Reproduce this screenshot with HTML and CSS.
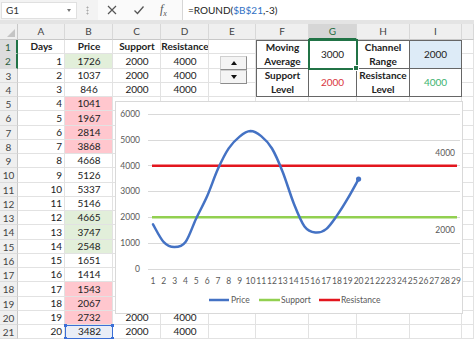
FILE: index.html
```html
<!DOCTYPE html>
<html lang="en">
<head>
  <meta charset="UTF-8">
  <meta name="viewport" content="width=device-width, initial-scale=1.0">
  <title>Support and Resistance</title>
  <link rel="stylesheet" href="styles.css">
</head>
<body>
  <div class="topbar">
    <div class="name-box">G1<span class="caret"></span></div>
    <div class="dots"></div>
    <div class="fx-buttons">
      <svg class="icon" viewBox="0 0 12 12"><path d="M2 2 L10 10 M10 2 L2 10" stroke="#555" stroke-width="1.2" fill="none"/></svg>
      <svg class="icon" viewBox="0 0 12 12"><path d="M1.5 6.5 L4.5 9.5 L10.5 2.5" stroke="#555" stroke-width="1.3" fill="none"/></svg>
      <span class="fx">f<sub>x</sub></span>
    </div>
    <div class="formula">=ROUND(<span class="ref">$B$21</span>,-3)</div>
  </div>

  <div class="sheet" id="sheet">
    <div class="spin">
      <div class="spin-btn"><span class="tri-up"></span></div>
      <div class="spin-btn"><span class="tri-down"></span></div>
    </div>

    <div class="chart">
      <svg id="chart" width="348" height="213" viewBox="0 0 348 213">
        <rect x="0.5" y="0.5" width="347" height="212" fill="#fff" stroke="#d9d9d9"/>
        <g stroke="#d9d9d9" stroke-width="1">
          <line x1="33" y1="13.5" x2="345" y2="13.5"/>
          <line x1="33" y1="39.5" x2="345" y2="39.5"/>
          <line x1="33" y1="64.5" x2="345" y2="64.5"/>
          <line x1="33" y1="90.5" x2="345" y2="90.5"/>
          <line x1="33" y1="116.5" x2="345" y2="116.5"/>
          <line x1="33" y1="142.5" x2="345" y2="142.5"/>
          <line x1="33" y1="168.5" x2="345" y2="168.5"/>
        </g>
        <g class="axis-text" text-anchor="end">
          <text x="25" y="16">6000</text>
          <text x="25" y="42">5000</text>
          <text x="25" y="68">4000</text>
          <text x="25" y="93">3000</text>
          <text x="25" y="119">2000</text>
          <text x="25" y="145">1000</text>
          <text x="25" y="171">0</text>
        </g>
        <g id="xlabels" class="axis-text" text-anchor="middle"></g>
        <line x1="37" y1="64.7" x2="342" y2="64.7" stroke="#e3161e" stroke-width="2.5"/>
        <line x1="37" y1="116.3" x2="342" y2="116.3" stroke="#92d050" stroke-width="2.5"/>
        <path id="price-line" d="" stroke="#4472c4" stroke-width="2.5" fill="none" stroke-linecap="round"/>
        <circle id="price-end" r="2.6" fill="#4472c4"/>
        <g class="axis-text" text-anchor="end">
          <text x="340" y="55">4000</text>
          <text x="340" y="132">2000</text>
        </g>
        <g class="legend-text">
          <line x1="94" y1="199" x2="114" y2="199" stroke="#4472c4" stroke-width="2.5"/>
          <text x="116" y="202">Price</text>
          <line x1="144" y1="199" x2="165" y2="199" stroke="#92d050" stroke-width="2.5"/>
          <text x="166" y="202">Support</text>
          <line x1="204" y1="199" x2="225" y2="199" stroke="#e3161e" stroke-width="2.5"/>
          <text x="226" y="202">Resistance</text>
        </g>
      </svg>
    </div>
  </div>

  <script>
    const price = [1726, 1037, 846, 1041, 1967, 2814, 3868, 4668, 5126, 5337,
                   5146, 4665, 3747, 2548, 1651, 1414, 1543, 2067, 2732, 3482];
    const green = [2, 13, 14, 15];
    const red = [5, 6, 7, 8, 18, 19, 20];

    const sheet = document.getElementById("sheet");
    const frag = document.createDocumentFragment();

    function add(cls, html) {
      const d = document.createElement("div");
      d.className = cls;
      d.innerHTML = html || "";
      frag.appendChild(d);
      return d;
    }

    // Column headers
    add("corner", '<span class="corner-tri"></span>');
    "ABCDEFGHI".split("").forEach(function (c) {
      add("colhead" + (c === "G" ? " active" : ""), c);
    });
    add("colhead");

    // Rows
    for (let r = 1; r <= 21; r++) {
      add("rowhead" + (r <= 2 ? " active" : ""), r);
      if (r === 1) {
        add("cell b", "Days");
        add("cell b", "Price");
        add("cell b", "Support");
        add("cell b", "Resistance");
      } else {
        add("cell r", r - 1);
        let cls = "cell";
        if (green.includes(r)) cls += " good";
        if (red.includes(r)) cls += " bad";
        if (r === 21) cls += " ref-cell";
        const b = add(cls, price[r - 2]);
        if (r === 21) {
          b.innerHTML += '<i class="h tl"></i><i class="h tr"></i><i class="h bl"></i><i class="h br"></i>';
        }
        // C and D under the chart stay hidden
        const hidden = r >= 5 && r <= 19;
        add("cell", hidden ? "" : "2000");
        add("cell", hidden ? "" : "4000");
      }
      add("cell");

      if (r === 1) {
        add("tbl label top left span2", "Moving<br>Average");
        add("tbl top span2 sel", "3000");
        add("tbl label top span2", "Channel<br>Range");
        add("tbl top span2 blue", "2000");
      } else if (r === 3) {
        add("tbl label left span2", "Support<br>Level");
        add("tbl span2 red-text", "2000");
        add("tbl label span2", "Resistance<br>Level");
        add("tbl span2 green-text", "4000");
      } else if (r > 4) {
        add("cell"); add("cell"); add("cell"); add("cell");
      }
      add("cell");
    }
    sheet.insertBefore(frag, sheet.firstChild);

    // Chart: price line (smoothed)
    const x = i => 38 + i * 10.82;
    const y = v => 168 - v * 0.02583;
    const pts = price.map((v, i) => [x(i), y(v)]);
    let d = "M" + pts[0][0].toFixed(1) + " " + pts[0][1].toFixed(1);
    for (let i = 0; i < pts.length - 1; i++) {
      const p0 = pts[Math.max(i - 1, 0)];
      const p1 = pts[i];
      const p2 = pts[i + 1];
      const p3 = pts[Math.min(i + 2, pts.length - 1)];
      const c1 = [p1[0] + (p2[0] - p0[0]) / 6, p1[1] + (p2[1] - p0[1]) / 6];
      const c2 = [p2[0] - (p3[0] - p1[0]) / 6, p2[1] - (p3[1] - p1[1]) / 6];
      d += " C" + c1.map(n => n.toFixed(1)).join(" ") + " " +
           c2.map(n => n.toFixed(1)).join(" ") + " " +
           p2.map(n => n.toFixed(1)).join(" ");
    }
    document.getElementById("price-line").setAttribute("d", d);
    const last = pts[pts.length - 1];
    const dot = document.getElementById("price-end");
    dot.setAttribute("cx", last[0]);
    dot.setAttribute("cy", last[1]);

    // x axis labels 1..29
    const xl = document.getElementById("xlabels");
    let labels = "";
    for (let i = 0; i < 29; i++) {
      labels += '<text x="' + x(i).toFixed(1) + '" y="183">' + (i + 1) + "</text>";
    }
    xl.innerHTML = labels;
  </script>
</body>
</html>
```

FILE: styles.css
```css
/* Base */
body {
  margin: 0;
  font-family: Lato, "Liberation Sans", sans-serif;
  font-size: 10px;
  color: #222;
  background: #fff;
  overflow: hidden;
}

/* Formula bar */
.topbar {
  display: flex;
  align-items: center;
  height: 24px;
  box-sizing: border-box;
  background: #f3f3f3;
  border-bottom: 4px solid #e4e4e4;
}

.name-box {
  position: relative;
  width: 76px;
  height: 17px;
  margin-left: 1px;
  box-sizing: border-box;
  background: #fff;
  border: 1px solid #e0e0e0;
  padding-left: 4px;
  line-height: 15px;
  color: #333;
}

.caret {
  position: absolute;
  right: 5px;
  top: 6px;
  border-left: 2.5px solid transparent;
  border-right: 2.5px solid transparent;
  border-top: 3px solid #777;
}

.dots {
  width: 21px;
  height: 9px;
  background: radial-gradient(circle, #aaa 0.8px, transparent 1.2px) center top / 3px 3px repeat-y;
}

.fx-buttons {
  display: flex;
  align-items: center;
  gap: 15px;
  width: 84px;
  height: 20px;
  box-sizing: border-box;
  padding-left: 8px;
  background: #fafafa;
}

.icon {
  width: 12px;
  height: 12px;
}

.fx {
  width: 12px;
  font-family: "Liberation Serif", serif;
  font-style: italic;
  font-size: 12px;
  color: #555;
}

.fx sub {
  font-size: 8px;
}

.formula {
  flex: 1;
  height: 20px;
  line-height: 20px;
  background: #fff;
  border-left: 1px solid #d6d6d6;
  padding-left: 5px;
  color: #222;
}

.ref {
  color: #2f6fc4;
}

/* Sheet grid */
.sheet {
  position: relative;
  display: grid;
  grid-template-columns: 18px 47px 48px 48px 48px 47px 53px 48px 53px 52px 1fr;
  grid-template-rows: 16px repeat(21, 14.25px);
}

.corner,
.colhead,
.rowhead {
  background: #efefef;
  color: #444;
  box-sizing: border-box;
  text-align: center;
  overflow: hidden;
}

.corner {
  position: relative;
  border-right: 1px solid #c8c8c8;
  border-bottom: 1px solid #c8c8c8;
}

.corner-tri {
  position: absolute;
  right: 2px;
  bottom: 2px;
  border-left: 8px solid transparent;
  border-bottom: 8px solid #c4c4c4;
}

.colhead {
  line-height: 15px;
  border-right: 1px solid #d8d8d8;
  border-bottom: 1px solid #c8c8c8;
}

.colhead.active {
  background: #d6d6d6;
  color: #1e6b41;
  border-bottom: 2px solid #217346;
}

.rowhead {
  line-height: 14px;
  border-right: 1px solid #c8c8c8;
  border-bottom: 1px solid #dcdcdc;
}

.rowhead.active {
  background: #dcdcdc;
  color: #2b5e40;
  border-right: 2px solid #217346;
}

.cell {
  display: flex;
  align-items: flex-end;
  justify-content: center;
  box-sizing: border-box;
  padding: 0 2px 0 3px;
  line-height: 13px;
  white-space: nowrap;
  overflow: hidden;
  border-right: 1px solid #e2e2e2;
  border-bottom: 1px solid #e2e2e2;
}

.cell.r {
  justify-content: flex-end;
}

.cell.b {
  font-weight: bold;
}

.cell.good {
  background: #e2efda;
}

.cell.bad {
  background: #ffc7ce;
}

.cell.ref-cell {
  position: relative;
  overflow: visible;
  background: #e9eef7;
  border: 1px solid #3b6fd6;
}

.h {
  position: absolute;
  width: 3px;
  height: 3px;
  background: #3b6fd6;
}

.h.tl { left: -2px; top: -2px; }
.h.tr { right: -2px; top: -2px; }
.h.bl { left: -2px; bottom: -2px; }
.h.br { right: -2px; bottom: -2px; }

/* Summary table F1:I4 */
.tbl {
  grid-row: span 2;
  display: flex;
  align-items: center;
  justify-content: center;
  text-align: center;
  box-sizing: border-box;
  line-height: 14px;
  border-right: 1px solid #666;
  border-bottom: 1px solid #666;
}

.tbl.top {
  border-top: 1px solid #666;
}

.tbl.left {
  border-left: 1px solid #666;
}

.tbl.label {
  font-weight: bold;
}

.tbl.sel {
  position: relative;
  outline: 2px solid #217346;
  outline-offset: -1px;
}

.tbl.sel::after {
  content: "";
  position: absolute;
  right: -3px;
  bottom: -3px;
  width: 4px;
  height: 4px;
  background: #217346;
  border: 1px solid #fff;
}

.tbl.blue {
  background: #ddebf7;
}

.red-text {
  color: #d9363e;
}

.green-text {
  color: #3cb371;
}

/* Spin button */
.spin {
  position: absolute;
  left: 220px;
  top: 32px;
  width: 27px;
  display: flex;
  flex-direction: column;
}

.spin-btn {
  height: 14px;
  box-sizing: border-box;
  display: flex;
  align-items: center;
  justify-content: center;
  background: #f4f4f4;
  border: 1px solid #d0d0d0;
  border-right-color: #8c8c8c;
  border-bottom-color: #8c8c8c;
}

.tri-up {
  border-left: 3.5px solid transparent;
  border-right: 3.5px solid transparent;
  border-bottom: 4px solid #111;
}

.tri-down {
  border-left: 3.5px solid transparent;
  border-right: 3.5px solid transparent;
  border-top: 4px solid #111;
}

/* Chart */
.chart {
  position: absolute;
  left: 115px;
  top: 77px;
  width: 348px;
  height: 213px;
}

.chart svg {
  display: block;
}

.axis-text {
  font-family: Lato, "Liberation Sans", sans-serif;
  font-size: 8.5px;
  fill: #595959;
}

.legend-text {
  font-family: Lato, "Liberation Sans", sans-serif;
  font-size: 8.5px;
  fill: #595959;
}
```
